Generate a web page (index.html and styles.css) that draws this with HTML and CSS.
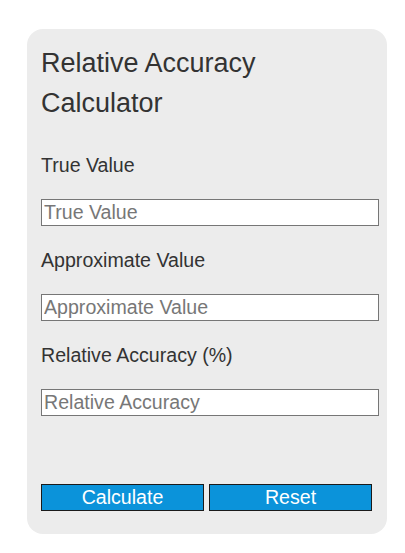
FILE: index.html
```html
<!DOCTYPE html>
<html lang="en">
<head>
    <meta charset="UTF-8">
    <meta name="viewport" content="width=device-width, initial-scale=1.0">
    <title>Relative Accuracy Calculator</title>
    <link rel="stylesheet" href="styles.css">
</head>
<body>

    <div class="calculator">
        <h1>Relative Accuracy Calculator</h1>

        <div class="field">
            <label for="trueValue">True Value</label>
            <input type="text" id="trueValue" placeholder="True Value">
        </div>

        <div class="field">
            <label for="approxValue">Approximate Value</label>
            <input type="text" id="approxValue" placeholder="Approximate Value">
        </div>

        <div class="field">
            <label for="accuracy">Relative Accuracy (%)</label>
            <input type="text" id="accuracy" placeholder="Relative Accuracy">
        </div>

        <div class="buttons">
            <button class="btn">Calculate</button>
            <button class="btn">Reset</button>
        </div>
    </div>

</body>
</html>
```

FILE: styles.css
```css
body {
    font-family: 'Liberation Sans', Arial, sans-serif;
    background: #fff;
    color: #333;
    margin: 0;
    padding: 29px 0 0 27px;
}

.calculator {
    width: 360px;
    box-sizing: border-box;
    background: #ececec;
    border-radius: 16px;
    padding: 14px 8px 23px 14px;
}

h1 {
    font-size: 27px;
    font-weight: normal;
    line-height: 40px;
    margin: 0 0 31px 0;
    color: #333;
}

.field {
    display: flex;
    flex-direction: column;
    margin-bottom: 23px;
}

.field label {
    font-size: 19.6px;
    line-height: 22px;
    margin-bottom: 23px;
}

.field input {
    height: 27px;
    width: 338px;
    box-sizing: border-box;
    border: 1px solid #767676;
    background: #fff;
    font-family: inherit;
    font-size: 19.6px;
    padding: 0 2px;
    color: #333;
    outline: none;
}

.field input::placeholder {
    color: #777;
}

.buttons {
    display: flex;
    gap: 5px;
    margin-top: 68px;
}

.btn {
    width: 163px;
    height: 27px;
    box-sizing: border-box;
    background: #0b93da;
    color: #fff;
    border: 1px solid #1a1a1a;
    font-family: inherit;
    font-size: 19.6px;
    padding: 0;
    cursor: pointer;
}
```
